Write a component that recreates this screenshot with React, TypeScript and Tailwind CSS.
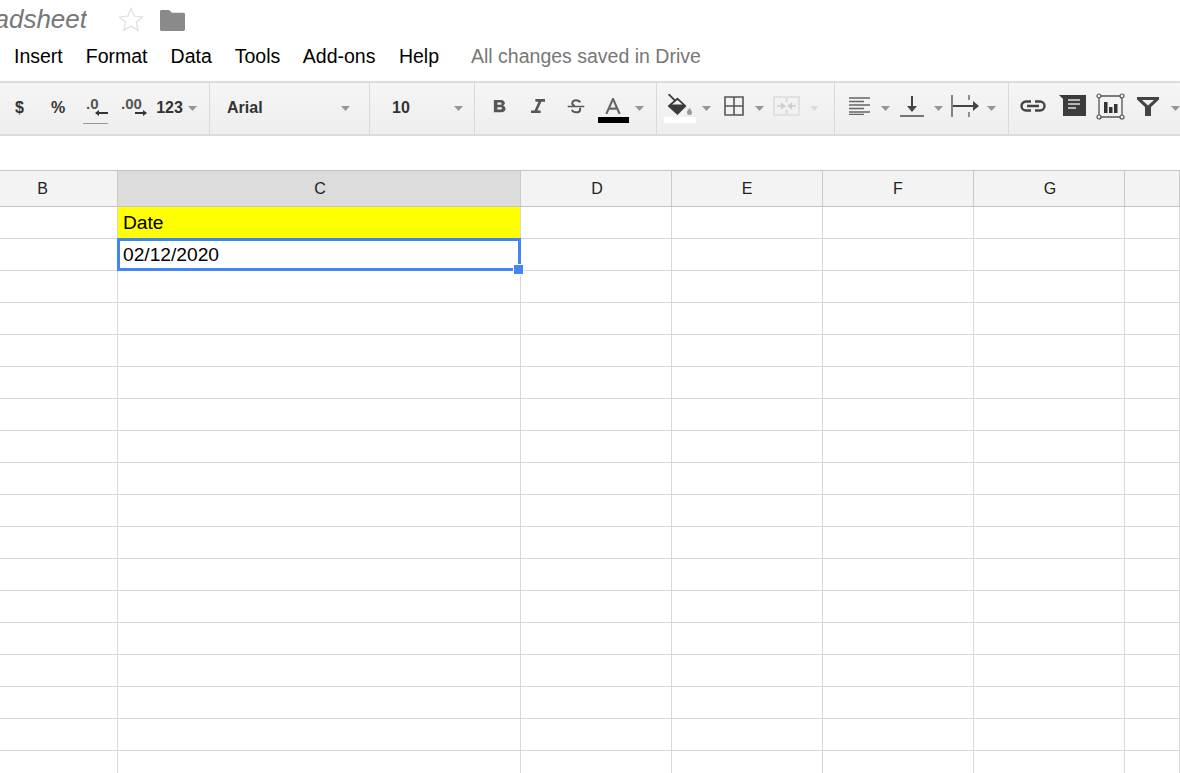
import React from 'react';

const ARIAL = "font-['Liberation_Sans',Arial,sans-serif]";

const Caret = ({ light }: { light?: boolean }) => (
  <svg width="9" height="5" viewBox="0 0 9 5" className="mt-[4px] block shrink-0">
    <path d="M0 0h9L4.500 5z" fill={light ? '#dcdcdc' : '#969696'} />
  </svg>
);

const Slot = ({ w, children }: { w: number; children: React.ReactNode }) => (
  <div className="flex h-full shrink-0 items-center justify-center" style={{ width: w }}>
    {children}
  </div>
);

const Group = ({ w, children }: { w: number; children: React.ReactNode }) => (
  <div className="flex h-[52px] shrink-0 items-center border-r border-[#d9d9d9] pb-[6px]" style={{ width: w }}>
    {children}
  </div>
);

const ToolText = ({ children }: { children: React.ReactNode }) => (
  <span className="block pt-[3px] text-[16px] font-bold text-[#333]">{children}</span>
);

const DecreaseIcon = () => (
  <svg width="26" height="36" viewBox="0 0 26 36" className="shrink-0">
    <text x="3" y="21" fontFamily="Liberation Sans" fontWeight="700" fontSize="15" fill="#555">.0</text>
    <path d="M14 25h11" stroke="#333" strokeWidth="2" />
    <path d="M12 25l4-3v6z" fill="#333" />
    <path d="M0 35.500h25" stroke="#999" strokeWidth="1" />
  </svg>
);

const IncreaseIcon = () => (
  <svg width="30" height="36" viewBox="0 0 30 36" className="shrink-0">
    <text x="2" y="21" fontFamily="Liberation Sans" fontWeight="700" fontSize="15" fill="#555">.00</text>
    <path d="M16 25h9" stroke="#333" strokeWidth="2" />
    <path d="M28 25l-4-3v6z" fill="#333" />
  </svg>
);

const BoldIcon = () => (
  <svg width="14" height="14" viewBox="0 0 16 16" className="shrink-0">
    <path fillRule="evenodd" fill="#555" d="M1 1h8c3 0 4.500 1.500 4.500 3.700 0 1.400-.8 2.500-2 3 1.700.4 2.800 1.700 2.800 3.400 0 2.500-1.800 3.900-4.800 3.900H1zM5 4v2.700h3.300c1 0 1.500-.5 1.500-1.400S9.300 4 8.300 4zM5 9.400V12h3.800c1 0 1.600-.5 1.600-1.300s-.6-1.300-1.600-1.300z" />
  </svg>
);

const ItalicIcon = () => (
  <svg width="16" height="14" viewBox="0 0 18 16" className="shrink-0">
    <path d="M6 1.500h11M1 14.500h11M12 1.500l-6 13" stroke="#555" strokeWidth="3" fill="none" />
  </svg>
);

const StrikeIcon = () => (
  <svg width="18" height="15" viewBox="0 0 20 18" className="shrink-0">
    <path d="M0 9h20" stroke="#555" strokeWidth="1.800" />
    <path d="M15 4C14 2 12 1.500 10 1.500 7.500 1.500 5.500 2.800 5.500 5c0 1.500 1 2.600 3 3.300M5 13c1 2 3 3 5 3 3 0 5-1.300 5-3.500 0-.7-.2-1.300-.6-1.800" stroke="#555" strokeWidth="2.400" fill="none" />
  </svg>
);

const TextColorIcon = () => (
  <div className="flex h-[34px] w-[31px] shrink-0 flex-col items-center pt-[9px]">
    <svg width="16" height="16" viewBox="0 0 18 18">
      <path d="M1.500 18L9 1l7.500 17M4.500 12h9" stroke="#666" strokeWidth="2.400" fill="none" />
    </svg>
    <div className="mt-[3px] h-[6px] w-[31px] bg-black" />
  </div>
);

const FillIcon = () => (
  <div className="flex h-[34px] w-[32px] shrink-0 flex-col items-center pt-[5px]">
    <svg width="25" height="21" viewBox="0 0 25 21" className="-translate-x-[0.5px]">
      <path d="M1 0l8 8" stroke="#444" strokeWidth="1.800" />
      <path d="M10 3.500l9 8.500-9 9-10-9z" fill="#3a3a3a" />
      <path d="M4.500 10.500L10 6l5 4.500z" fill="#f1f1f1" />
      <path d="M22 14c1.500 2 2.500 3 2.500 4.500a2.500 2.500 0 0 1-5 0c0-1.500 1-2.500 2.500-4.500z" fill="#999" />
    </svg>
    <div className="mt-[2px] h-[6px] w-[32px] bg-white" />
  </div>
);

const BordersIcon = () => (
  <svg width="20" height="20" viewBox="0 0 20 20" className="shrink-0">
    <path d="M1 1h18v18H1zM10 1v18M1 10h18" stroke="#555" strokeWidth="1.600" fill="none" />
  </svg>
);

const MergeIcon = () => (
  <svg width="27" height="20" viewBox="0 0 27 20" className="shrink-0">
    <path d="M13 1H1v18h12M14 1h12v18H14M13 1v5M13 14v5M14 1v5M14 14v5" stroke="#dcdcdc" strokeWidth="1.500" fill="none" />
    <path d="M4 10h6M12 10L8.500 7.500v5zM23 10h-6M15 10l3.500-2.500v5z" stroke="#cfcfcf" strokeWidth="1.300" fill="#cfcfcf" />
  </svg>
);

const AlignIcon = () => (
  <svg width="21" height="18" viewBox="0 0 21 18" className="shrink-0">
    <path d="M0 1h21M0 4.500h15M0 8h21M0 11.500h15M0 15h21M0 17.500h15" stroke="#666" strokeWidth="1.500" />
  </svg>
);

const ValignIcon = () => (
  <svg width="24" height="21" viewBox="0 0 24 21" className="shrink-0">
    <path d="M12 0v11" stroke="#444" strokeWidth="2" />
    <path d="M7 10h10l-5 6z" fill="#444" />
    <path d="M0 20h24" stroke="#555" strokeWidth="1.600" />
  </svg>
);

const WrapIcon = () => (
  <svg width="28" height="22" viewBox="0 0 28 22" className="shrink-0">
    <path d="M1 0v22" stroke="#666" strokeWidth="1.600" />
    <path d="M18 0v5M18 17v5" stroke="#666" strokeWidth="1.400" />
    <path d="M2 11h21" stroke="#444" strokeWidth="2" />
    <path d="M22 6l6 5-6 5z" fill="#444" />
  </svg>
);

const LinkIcon = () => (
  <svg width="28" height="14" viewBox="0 0 28 14" className="shrink-0">
    <path d="M12 2.500H7a4.500 4.500 0 0 0 0 9h5M16 2.500h5a4.500 4.500 0 0 1 0 9h-5M8 7h12" stroke="#444" strokeWidth="2.400" fill="none" />
  </svg>
);

const CommentIcon = () => (
  <svg width="27" height="22" viewBox="0 0 27 22" className="shrink-0">
    <path d="M0 0h27v21H4V4z" fill="#3c3c3c" />
    <path d="M9 5h12M9 9h12M9 13h8" stroke="#ddd" strokeWidth="1.600" />
  </svg>
);

const ChartIcon = () => (
  <svg width="29" height="27" viewBox="0 0 29 27" className="shrink-0">
    <path d="M3 3h23v21H3z" stroke="#555" strokeWidth="1.300" fill="none" />
    <path d="M8 9h3.500v11H8zM13 14h3.500v6H13zM18 11h3.500v9H18z" fill="#333" />
    {[[3, 3], [26, 3], [3, 24], [26, 24]].map(([x, y]) => (
      <circle key={x * 100 + y} cx={x} cy={y} r="2" fill="#f1f1f1" stroke="#555" strokeWidth="1.200" />
    ))}
  </svg>
);

const FilterIcon = () => (
  <svg width="22" height="19" viewBox="0 0 22 19" className="shrink-0">
    <path d="M0 0h22v2.500L14 10v9H8v-9L0 2.500z" fill="#444" />
    <path d="M5 3h12l-6 5.500z" fill="#f1f1f1" />
  </svg>
);

const Toolbar = () => (
  <div className={`flex h-[55px] items-start overflow-hidden border-y-2 border-[#dcdcdc] bg-linear-to-b from-[#f5f5f5] to-[#eeeeee] ${ARIAL}`}>
    <Group w={210}>
      <Slot w={39}><ToolText>$</ToolText></Slot>
      <Slot w={38}><ToolText>%</ToolText></Slot>
      <Slot w={38}><DecreaseIcon /></Slot>
      <Slot w={38}><IncreaseIcon /></Slot>
      <Slot w={33}><ToolText>123</ToolText></Slot>
      <Slot w={12}><Caret /></Slot>
    </Group>
    <Group w={160}>
      <div className="flex-1 pl-[17px]"><ToolText>Arial</ToolText></div>
      <div className="pr-[19px]"><Caret /></div>
    </Group>
    <Group w={105}>
      <div className="flex-1 pl-[22px]"><ToolText>10</ToolText></div>
      <div className="pr-[11px]"><Caret /></div>
    </Group>
    <Group w={182}>
      <Slot w={50}><BoldIcon /></Slot>
      <Slot w={26}><ItalicIcon /></Slot>
      <Slot w={50}><StrikeIcon /></Slot>
      <Slot w={24}><TextColorIcon /></Slot>
      <Slot w={28}><Caret /></Slot>
    </Group>
    <Group w={178}>
      <Slot w={46}><FillIcon /></Slot>
      <Slot w={6}><Caret /></Slot>
      <Slot w={50}><BordersIcon /></Slot>
      <Slot w={0}><Caret /></Slot>
      <Slot w={55}><MergeIcon /></Slot>
      <Slot w={0}><Caret light /></Slot>
    </Group>
    <Group w={174}>
      <Slot w={48}><AlignIcon /></Slot>
      <Slot w={4}><Caret /></Slot>
      <Slot w={50}><ValignIcon /></Slot>
      <Slot w={2}><Caret /></Slot>
      <Slot w={52}><WrapIcon /></Slot>
      <Slot w={0}><Caret /></Slot>
    </Group>
    <div className="flex h-[52px] items-center pb-[6px]">
      <Slot w={48}><LinkIcon /></Slot>
      <Slot w={30}><CommentIcon /></Slot>
      <Slot w={46}><ChartIcon /></Slot>
      <Slot w={30}><FilterIcon /></Slot>
      <div className="pl-[8px]"><Caret /></div>
    </div>
  </div>
);

const COLS = [
  { label: 'B', w: 118, cls: 'pr-[32px]' },
  { label: 'C', w: 403, cls: 'pl-[2px]' },
  { label: 'D', w: 151, cls: 'pl-[2px]' },
  { label: 'E', w: 151, cls: '' },
  { label: 'F', w: 151, cls: '' },
  { label: 'G', w: 151, cls: 'pl-[2px]' },
  { label: '', w: 55, cls: '' },
];

const ROWS = Array.from({ length: 18 }, (_, i) => i);

export default function App() {
  return (
    <div className={`h-[773px] w-[1180px] overflow-hidden bg-white ${ARIAL}`}>
      <div className="flex h-[38px] items-center">
        <div className="flex w-[87px] justify-end overflow-hidden whitespace-nowrap text-[26px] italic text-[#777]">
          Untitled spreadsheet
        </div>
        <svg width="26" height="25" viewBox="0 0 26 25" className="ml-[31px]">
          <path d="M13 1.500l3.300 7.700 8.200.7-6.200 5.400 1.900 8.100L13 19.100l-7.200 4.300 1.900-8.100-6.200-5.400 8.200-.7z" fill="none" stroke="#e0e0e0" strokeWidth="1.300" />
        </svg>
        <svg width="25" height="21" viewBox="0 0 25 22" preserveAspectRatio="none" className="ml-[16px] mt-[3px]">
          <path d="M0 1.500C0 .7.700 0 1.500 0H9l3 3h11.500c.8 0 1.500.7 1.500 1.500v16c0 .8-.7 1.500-1.500 1.500h-22C.7 22 0 21.300 0 20.500z" fill="#8a8a8a" />
        </svg>
      </div>
      <div className="flex h-[43px] items-center pb-[5px] pl-[14px] text-[19.500px] text-black">
        <span>Insert</span>
        <span className="ml-[23px]">Format</span>
        <span className="ml-[23px]">Data</span>
        <span className="ml-[23px]">Tools</span>
        <span className="ml-[22.500px]">Add-ons</span>
        <span className="ml-[23.500px]">Help</span>
        <span className="ml-[32px] text-[#777]">All changes saved in Drive</span>
      </div>
      <Toolbar />
      <div className="h-[34px]" />
      <div className="relative">
        <div className="flex h-[37px] border-y border-[#c4c4c4]">
          {COLS.map((c, i) => (
            <div
              key={c.label || 'H'}
              className={`flex shrink-0 items-center justify-center border-r border-[#c9c9c9] text-[16px] text-[#222] ${c.cls} ${i === 1 ? 'bg-[#dcdcdc]' : 'bg-[#f3f3f3]'}`}
              style={{ width: c.w }}
            >
              {c.label}
            </div>
          ))}
        </div>
        {ROWS.map(r => (
          <div key={r} className="flex h-[32px]">
            {COLS.map((c, i) => (
              <div
                key={c.label || 'H'}
                className={`flex shrink-0 items-center border-b border-r border-[#d9d9d9] pl-[5px] pt-[2px] text-[19.200px] text-black ${r === 0 && i === 1 ? 'bg-[#ffff00]' : ''}`}
                style={{ width: c.w }}
              >
                {i === 1 && r === 0 && 'Date'}
                {i === 1 && r === 1 && '02/12/2020'}
              </div>
            ))}
          </div>
        ))}
        {/* selected cell */}
        <div className="absolute left-[117px] top-[68px] h-[33px] w-[404px] border-[3px] border-[#4285f4]">
          <div className="absolute -bottom-[7px] -right-[6px] h-[11px] w-[11px] border border-white bg-[#4285f4]" />
        </div>
      </div>
    </div>
  );
}
